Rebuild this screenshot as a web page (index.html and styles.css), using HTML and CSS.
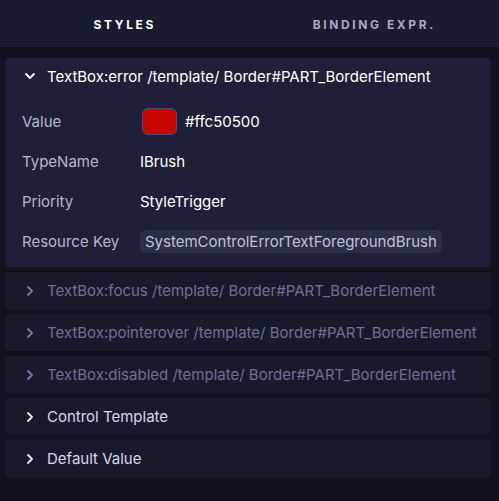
FILE: index.html
```html
<!DOCTYPE html>
<html>
<head>
<meta charset="utf-8">
<link rel="stylesheet" href="styles.css">
</head>
<body>
<div class="tabs">
  <div class="tab active">STYLES</div>
  <div class="tab">BINDING EXPR.</div>
</div>
<div class="list">
  <div class="card open">
    <div class="card-head">
      <svg class="chev" width="12" height="12" viewBox="0 0 12 12"><path d="M2 4 L6 8 L10 4" fill="none" stroke="currentColor" stroke-width="1.8" stroke-linecap="round" stroke-linejoin="round"/></svg>
      <span class="title">TextBox:error /template/ Border#PART_BorderElement</span>
    </div>
    <div class="props">
      <div class="row"><span class="label">Value</span><span class="val"><span class="swatch"></span>#ffc50500</span></div>
      <div class="row"><span class="label">TypeName</span><span class="val">IBrush</span></div>
      <div class="row"><span class="label">Priority</span><span class="val">StyleTrigger</span></div>
      <div class="row"><span class="label">Resource Key</span><span class="val"><span class="pill">SystemControlErrorTextForegroundBrush</span></span></div>
    </div>
  </div>
  <div class="card dim">
    <div class="card-head">
      <svg class="chev" width="12" height="12" viewBox="0 0 12 12"><path d="M4 2 L8 6 L4 10" fill="none" stroke="currentColor" stroke-width="1.8" stroke-linecap="round" stroke-linejoin="round"/></svg>
      <span class="title">TextBox:focus /template/ Border#PART_BorderElement</span>
    </div>
  </div>
  <div class="card dim">
    <div class="card-head">
      <svg class="chev" width="12" height="12" viewBox="0 0 12 12"><path d="M4 2 L8 6 L4 10" fill="none" stroke="currentColor" stroke-width="1.8" stroke-linecap="round" stroke-linejoin="round"/></svg>
      <span class="title">TextBox:pointerover /template/ Border#PART_BorderElement</span>
    </div>
  </div>
  <div class="card dim">
    <div class="card-head">
      <svg class="chev" width="12" height="12" viewBox="0 0 12 12"><path d="M4 2 L8 6 L4 10" fill="none" stroke="currentColor" stroke-width="1.8" stroke-linecap="round" stroke-linejoin="round"/></svg>
      <span class="title">TextBox:disabled /template/ Border#PART_BorderElement</span>
    </div>
  </div>
  <div class="card">
    <div class="card-head">
      <svg class="chev" width="12" height="12" viewBox="0 0 12 12"><path d="M4 2 L8 6 L4 10" fill="none" stroke="currentColor" stroke-width="1.8" stroke-linecap="round" stroke-linejoin="round"/></svg>
      <span class="title">Control Template</span>
    </div>
  </div>
  <div class="card">
    <div class="card-head">
      <svg class="chev" width="12" height="12" viewBox="0 0 12 12"><path d="M4 2 L8 6 L4 10" fill="none" stroke="currentColor" stroke-width="1.8" stroke-linecap="round" stroke-linejoin="round"/></svg>
      <span class="title">Default Value</span>
    </div>
  </div>
</div>
</body>
</html>
```
FILE: styles.css
```css
html, body {
  margin: 0;
  padding: 0;
  background: #12121f;
  font-family: Inter, "Noto Sans", sans-serif;
  width: 499px;
  height: 501px;
  overflow: hidden;
}
.tabs {
  display: flex;
  height: 47px;
  background: #1a1b2e;
}
.tab {
  flex: 1;
  display: flex;
  align-items: center;
  justify-content: center;
  padding-top: 1px;
  font-size: 12px;
  font-weight: 700;
  letter-spacing: 2.6px;
  color: #a6a9c6;
}
.tab.active {
  color: #ffffff;
}
.list {
  display: flex;
  flex-direction: column;
  gap: 5px;
  padding: 11px 8px 0 5px;
}
.card {
  background: #181a2c;
  border-radius: 5px;
  color: #d6d8ea;
}
.card.open {
  background: #1f1f3a;
  color: #ffffff;
  padding-bottom: 6px;
}
.card.dim {
  color: #6e7192;
}
.card-head {
  height: 37px;
  display: flex;
  align-items: center;
  padding-left: 19px;
  font-size: 15px;
}
.card.open .card-head {
  height: 36px;
}
.chev {
  width: 12px;
  height: 12px;
  margin-right: 11px;
}
.card.dim .chev {
  color: #7a7d9c;
}
.card:not(.dim):not(.open) .chev {
  color: #e6e8f4;
}
.props {
  display: flex;
  flex-direction: column;
  padding-left: 17px;
  padding-top: 7px;
}
.row {
  display: flex;
  align-items: center;
  height: 40px;
  font-size: 15px;
}
.label {
  width: 118px;
  color: #b4b7d0;
}
.val {
  display: flex;
  align-items: center;
  color: #ffffff;
}
.swatch {
  width: 33px;
  height: 25px;
  border-radius: 6px;
  background: #c50500;
  border: 1px solid #4b4b6e;
  margin-left: 2px;
  margin-right: 8px;
}
.pill {
  background: #2c2d47;
  border-radius: 6px;
  padding: 2px 5px;
  color: #bfc2dc;
}
```
